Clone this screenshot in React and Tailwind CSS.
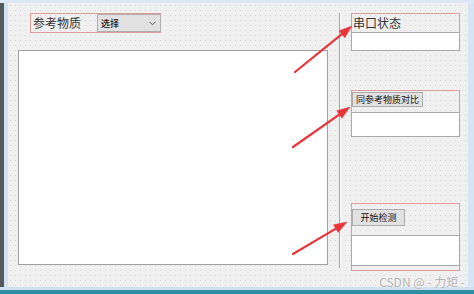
/**
 * Qt Designer style form preview: reference material picker, result area,
 * and three stacked control groups on the right, with red callout arrows.
 */

const CJK = "font-['Noto_Sans_CJK_SC','Noto_Sans',sans-serif]";

const ARROWS = [
  { from: [295, 72], to: [352, 26] },
  { from: [293, 147], to: [350, 107] },
  { from: [293, 254], to: [347, 222] },
];

function arrowHead(from, to, len = 13, half = 4.5) {
  const dx = to[0] - from[0];
  const dy = to[1] - from[1];
  const d = Math.hypot(dx, dy);
  const ux = dx / d;
  const uy = dy / d;
  const bx = to[0] - ux * len;
  const by = to[1] - uy * len;
  const nx = -uy;
  const ny = ux;
  return {
    base: [bx + ux * 2, by + uy * 2],
    points: `${to[0]},${to[1]} ${bx + nx * half},${by + ny * half} ${bx - nx * half},${by - ny * half}`,
  };
}

function Callouts() {
  return (
    <svg className="absolute inset-0 pointer-events-none" width="474" height="294">
      {ARROWS.map((a, i) => {
        const head = arrowHead(a.from, a.to);
        return (
          <g key={i} fill="#e8353a" stroke="#e8353a">
            <line
              x1={a.from[0]}
              y1={a.from[1]}
              x2={head.base[0]}
              y2={head.base[1]}
              strokeWidth="2.2"
              strokeLinecap="round"
            />
            <polygon points={head.points} strokeWidth="0.5" />
          </g>
        );
      })}
    </svg>
  );
}

function Button({ children, className }) {
  return (
    <div
      className={`flex items-center justify-center bg-[#e1e1e1] border border-[#adadad] text-[9px] text-[#111] leading-none ${className}`}
    >
      {children}
    </div>
  );
}

function Input({ className }) {
  return <div className={`-mx-[1px] -mb-[1px] bg-white border border-[#a9a9a9] ${className}`} />;
}

export default function App() {
  return (
    <div className={`relative w-[474px] h-[294px] flex flex-col bg-[#d6e4f3] overflow-hidden ${CJK}`}>
      <div className="h-[3px] bg-[#dce8f5]" />

      <div className="flex-1 flex min-h-0">
        <div className="w-[4px] bg-[#55585e]" />
        <div className="w-[4px] bg-[#d3e2f2]" />

        {/* Form canvas */}
        <div className="flex-1 flex items-start bg-[#f0f0f0] bg-[radial-gradient(circle,#d9d9d9_0.6px,transparent_0.9px)] [background-size:5px_5px]">
          {/* Left column */}
          <div className="w-[320px] pl-[10px] pt-[10px] flex flex-col">
            <div className="ml-[12px] w-[131px] h-[20px] border border-[#e39a9a] flex items-center">
              <span className="w-[66px] pl-[2px] text-[12px] text-[#333] leading-none">参考物质</span>
              <div className="flex-1 h-[18px] mr-[-1px] bg-[#e1e1e1] border border-[#adadad] flex items-center justify-between pl-[3px] pr-[4px]">
                <span className="text-[9px] text-[#111] font-medium leading-none">选择</span>
                <svg width="7" height="5" viewBox="0 0 7 5" fill="none" stroke="#555" strokeWidth="1">
                  <path d="M0.5 0.8 L3.5 3.8 L6.5 0.8" />
                </svg>
              </div>
            </div>
            <div className="mt-[17px] w-[310px] h-[215px] bg-white border border-[#a0a0a0]" />
          </div>

          {/* Vertical line */}
          <div className="ml-[11px] mt-[10px] h-[255px] w-[2px] border-l border-[#a3a3a3] border-r border-r-white" />

          {/* Right column */}
          <div className="ml-[10px] w-[109px] pt-[10px] flex flex-col">
            <div className="border border-[#e39a9a] flex flex-col">
              <span className="h-[18px] pl-[1px] text-[12px] text-[#333] leading-[18px]">串口状态</span>
              <Input className="h-[19px]" />
            </div>

            <div className="mt-[39px] border border-[#e39a9a] flex flex-col">
              <Button className="mt-[1px] w-[71px] h-[15px]">同参考物质对比</Button>
              <Input className="mt-[5px] h-[25px]" />
            </div>

            <div className="mt-[66px] border border-[#e39a9a] flex flex-col pt-[5px]">
              <Button className="w-[53px] h-[17px]">开始检测</Button>
              <Input className="mt-[9px] h-[31px]" />
              <div className="h-[5px]" />
            </div>
          </div>
        </div>

        <div className="w-[6px] bg-[#d6e4f3]" />
      </div>

      <div className="h-[3px] bg-[#cfe0f1]" />
      <div className="h-[4px] bg-[#2f8ea6]" />

      <Callouts />

      <span className="absolute right-[9px] top-[276px] text-[12px] text-[#b3b3b3] leading-none whitespace-nowrap [text-shadow:0_0_2px_#fff]">
        CSDN @ - 力矩 -
      </span>
    </div>
  );
}
